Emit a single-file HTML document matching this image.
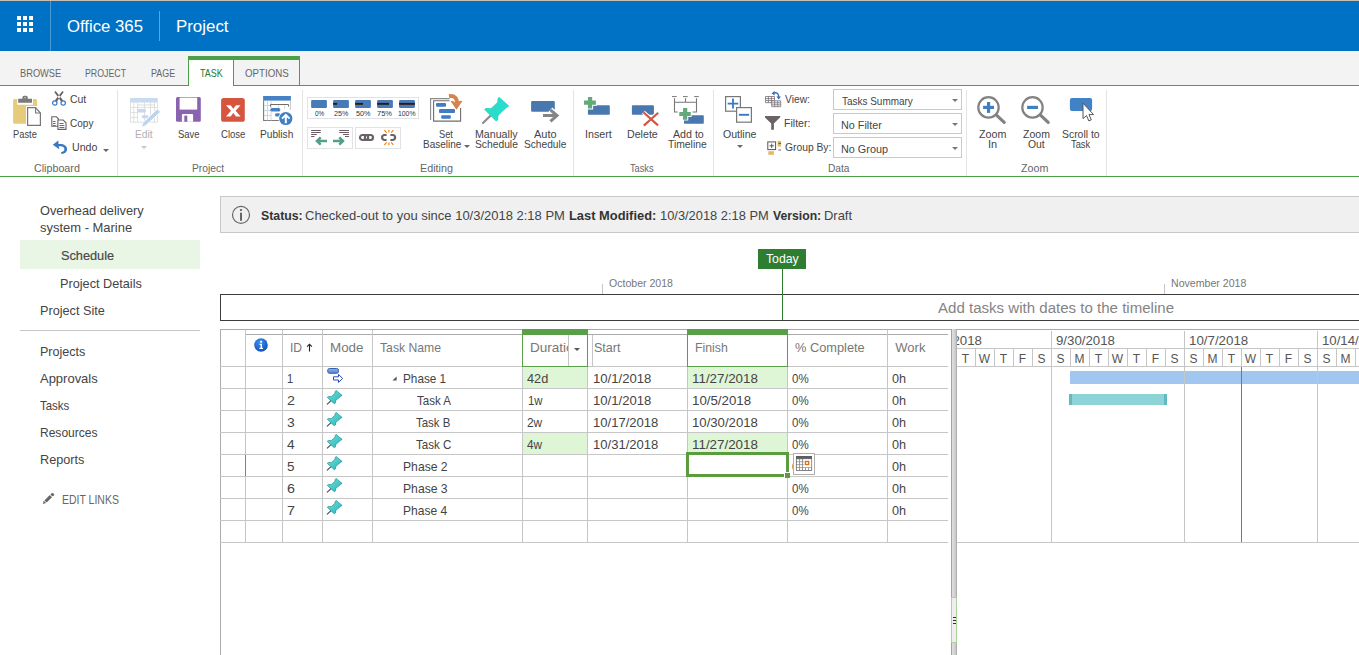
<!DOCTYPE html><html lang="en"><head><meta charset="utf-8"><title>Project - Schedule</title><style>
html,body{margin:0;padding:0;background:#fff}
body{width:1359px;height:655px;overflow:hidden;font-family:"Liberation Sans",sans-serif}
#page{position:relative;width:1359px;height:655px;overflow:hidden;background:#fff}
#page div,#page span,#page svg{position:absolute}
.sec{left:0;top:0;width:0;height:0}
.t{white-space:nowrap;line-height:1;transform-origin:0 0}
.ln{background:#c6c6c6}
.gs{background:#e3e3e3;width:1px;top:90px;height:86px}
.sel{left:833px;width:127px;height:19px;border:1px solid #c9c9c9;background:#fff}
.arr{width:0;height:0;border-left:3px solid transparent;border-right:3px solid transparent;border-top:3px solid #666}
.hl{background:#def6d6}
.dl{font-size:12px;color:#555;width:19px;text-align:center;line-height:1;top:353px}
</style></head><body><div id="page">
<div class="sec" id="suite">
<div style="left:0;top:0;width:1359px;height:1px;background:#cbbdb1"></div>
<div style="left:0;top:1px;width:1359px;height:50px;background:#0072c6"></div>
<div style="left:50px;top:1px;width:1px;height:50px;background:#4a9ad6"></div>
<div style="left:159px;top:11px;width:1px;height:30px;background:#5aa5dc"></div>
<svg style="left:17px;top:16px" width="16" height="16" viewBox="0 0 16 16" ><rect x="0" y="0" width="4" height="4" fill="#fff"/><rect x="0" y="6" width="4" height="4" fill="#fff"/><rect x="0" y="12" width="4" height="4" fill="#fff"/><rect x="6" y="0" width="4" height="4" fill="#fff"/><rect x="6" y="6" width="4" height="4" fill="#fff"/><rect x="6" y="12" width="4" height="4" fill="#fff"/><rect x="12" y="0" width="4" height="4" fill="#fff"/><rect x="12" y="6" width="4" height="4" fill="#fff"/><rect x="12" y="12" width="4" height="4" fill="#fff"/></svg>
<span class="t" style="left:67.19px;top:18.0px;font-size:17px;color:#fff;transform:scaleX(0.9843);">Office 365</span>
<span class="t" style="left:176.21px;top:18.0px;font-size:17px;color:#fff;transform:scaleX(0.9923);">Project</span>
</div>
<div class="sec" id="tabs">
<div style="left:0;top:51px;width:1359px;height:34px;background:#f3f3f3"></div>
<div style="left:0;top:85px;width:1359px;height:1px;background:#4aa04a"></div>
<div style="left:188px;top:56px;width:112px;height:4px;background:#4aa04a"></div>
<div style="left:188px;top:60px;width:1px;height:26px;background:#4aa04a"></div>
<div style="left:189px;top:60px;width:44px;height:26px;background:#fff"></div>
<div style="left:233px;top:60px;width:1px;height:26px;background:#4aa04a"></div>
<div style="left:299px;top:60px;width:1px;height:26px;background:#4aa04a"></div>
<span class="t" style="left:19.86px;top:68.0px;font-size:11px;color:#666;transform:scaleX(0.8438);">BROWSE</span>
<span class="t" style="left:85.18px;top:68.0px;font-size:11px;color:#666;transform:scaleX(0.7989);">PROJECT</span>
<span class="t" style="left:150.63px;top:68.0px;font-size:11px;color:#666;transform:scaleX(0.8107);">PAGE</span>
<span class="t" style="left:199.90px;top:68.0px;font-size:11px;color:#267a36;transform:scaleX(0.8143);">TASK</span>
<span class="t" style="left:245.18px;top:68.0px;font-size:11px;color:#666;transform:scaleX(0.8853);">OPTIONS</span>
</div>
<div class="sec" id="ribbon">
<div style="left:0;top:86px;width:1359px;height:90px;background:#fff"></div>
<div style="left:0;top:176px;width:1359px;height:1px;background:#4aa04a"></div>
<div class="gs" style="left:117px"></div>
<div class="gs" style="left:302px"></div>
<div class="gs" style="left:573px"></div>
<div class="gs" style="left:713px"></div>
<div class="gs" style="left:966px"></div>
<div class="gs" style="left:1106px"></div>
<div class="arr" style="left:103px;top:149px"></div>
<div class="arr" style="left:141px;top:146px;border-top-color:#c8c8c8"></div>
<div class="arr" style="left:464px;top:145px"></div>
<div class="arr" style="left:737px;top:145px"></div>
<div class="sel" style="top:89px"></div>
<div class="arr" style="left:952px;top:99px;border-top-color:#777"></div>
<div class="sel" style="top:113px"></div>
<div class="arr" style="left:952px;top:123px;border-top-color:#777"></div>
<div class="sel" style="top:137px"></div>
<div class="arr" style="left:952px;top:147px;border-top-color:#777"></div>
<svg style="left:13px;top:95px" width="29" height="32" viewBox="0 0 29 32" ><rect x=".1" y="4" width="24" height="24.8" rx="1.6" fill="#e7cb7d"/><path d="M4.2 8.8V2.8h4.4V.9a2 2 0 0 1 2-1.9h3a2 2 0 0 1 2 1.9v1.9h4.4v6z" fill="#fff" transform="translate(0,1)"/><path d="M5.2 7.8V3.8h4.2V2.4a1.7 1.7 0 0 1 1.7-1.7h2a1.7 1.7 0 0 1 1.7 1.7v1.4H19v4z" fill="#7a7a7a"/><rect x="11.3" y="2" width="1.6" height="1.3" rx=".5" fill="#cfcfcf"/><rect x="13" y="11" width="16" height="21" fill="#fff"/><path d="M14.6 12.6h8l4.8 5.4v12.4H14.6z" fill="#fff" stroke="#777" stroke-width="1.2"/><path d="M22.6 12.6v5.4h4.8" fill="none" stroke="#777" stroke-width="1.1"/></svg>
<svg style="left:51px;top:90px" width="16" height="17" viewBox="0 0 16 17" ><path d="M3.3 1.9l1.3-.8 7.5 9.1-1.9 1.5zM12.7 1.9l-1.3-.8-7.5 9.1 1.9 1.5z" fill="#6a6267"/><circle cx="3.8" cy="13" r="2.2" fill="none" stroke="#3b78c3" stroke-width="1.2"/><circle cx="12.2" cy="13" r="2.2" fill="none" stroke="#3b78c3" stroke-width="1.2"/></svg>
<svg style="left:51px;top:116px" width="17" height="15" viewBox="0 0 17 15" ><path d="M.8.8h4.6l2 2v7.4H.8z" fill="#fff" stroke="#6a6267" stroke-width="1.1"/><path d="M2 5.5h2.6M2 7.5h2.6M2 9.5h2.6" stroke="#3b78c3" stroke-width="1"/><path d="M6.9 4h5.3l2.8 2.8v6.6H6.9z" fill="#fff" stroke="#6a6267" stroke-width="1.1"/><path d="M8.4 7.5h4.2M8.4 9.5h5M8.4 11.5h5" stroke="#3b78c3" stroke-width="1"/></svg>
<svg style="left:52px;top:140px" width="16" height="15" viewBox="0 0 16 15" ><path d="M6.3.5L.8 4.7l6.4 4.5-.5-2.9c3.6-.5 5.8.7 5.7 2.9-.1 1.7-1.4 2.6-3.5 3l.7 1.9c3.5-.5 5.5-2.1 5.5-5 0-3.5-3.6-5.6-8.6-5.1z" fill="#3b78c3"/></svg>
<svg style="left:130px;top:97px" width="31" height="31" viewBox="0 0 31 31" ><rect x="0" y="1" width="27.8" height="4.6" fill="#c8dbef"/><path d="M.5 5.6v19.6h27V5.6M0 10.5h28M0 15.5h7.5M0 20.5h7.5M3.8 5.6v19.6M7.5 5.6v19.6M14.5 5.6v19.6M20.5 5.6v19.6M24.5 5.6v19.6" fill="none" stroke="#e0e0e0" stroke-width="1"/><path d="M7.5 10.4v-2.4h17v3" fill="none" stroke="#dadada"/><rect x="7.2" y="12" width="8.7" height="3.5" rx="1" fill="#c5d8ee"/><rect x="11.9" y="18.2" width="6.6" height="3" rx="1" fill="#c5d8ee"/><path d="M27.4 11.8l3.2 3.2-15.1 13.8-4.1 1.6 1.2-4.5z" fill="#bfd4ec" stroke="#fff" stroke-width="1"/></svg>
<svg style="left:176px;top:97px" width="26" height="26" viewBox="0 0 26 26" ><rect x="0" y="0" width="24.8" height="24.8" rx="1.6" fill="#8a63b0"/><rect x="3.6" y=".6" width="17.6" height="12" fill="#fff"/><path d="M5.9 24.8v-6.9a1 1 0 0 1 1-1h9.2a1 1 0 0 1 1 1v6.9z" fill="#fff"/><rect x="8.3" y="18.6" width="3" height="6.2" fill="#8a63b0"/></svg>
<svg style="left:221px;top:97px" width="25" height="26" viewBox="0 0 25 26" ><rect x=".1" y="1" width="23.7" height="23.8" rx="2.6" fill="#d6553e"/><path d="M5 8.2h4.6l2.7 3.5 2.7-3.5h4.6l-5 5.6 5 5.7h-4.6l-2.7-3.6-2.7 3.6H5l5-5.7z" fill="#fff"/></svg>
<svg style="left:263px;top:96px" width="32" height="31" viewBox="0 0 32 31" ><rect x=".1" y="0" width="27.8" height="4.6" fill="#4682c3"/><path d="M.6 4.6V24.5H16" fill="none" stroke="#7a7a7a" stroke-width="1.1"/><path d="M27.4 4.6V14" fill="none" stroke="#c4c4c4"/><path d="M1 9.5h7M1 14.5h7M1 19.5h7M4.5 5v19.5M8 5v19.5" fill="none" stroke="#c9d6e6"/><path d="M15.5 9v6M21.5 9v4" stroke="#dcdcdc"/><path d="M7.5 10.6V8.5h18v2.1" fill="none" stroke="#6e6e6e" stroke-width="1"/><rect x="7.4" y="11.9" width="9.9" height="3.7" rx="1.7" fill="#4682c3"/><rect x="12" y="17.2" width="5.3" height="3.3" rx="1.5" fill="#4682c3"/><circle cx="22.8" cy="22.5" r="7.4" fill="#fff"/><circle cx="22.8" cy="22.5" r="6.6" fill="#3f7fc4"/><path d="M22.8 27.2V19.2M19 22.6l3.8-3.8 3.8 3.8" fill="none" stroke="#fff" stroke-width="2"/></svg>
<svg style="left:307px;top:97px" width="112" height="22" viewBox="0 0 112 22" ><rect x=".5" y=".5" width="111" height="21" fill="#fff" stroke="#dfe2e6"/><rect x="4.1" y="3" width="15.8" height="7.9" rx="1" fill="#487ab8"/><rect x="26.1" y="3" width="15.8" height="7.9" rx="1" fill="#487ab8"/><rect x="26.1" y="5.9" width="4.0" height="1.9" fill="#32190c"/><rect x="48.1" y="3" width="15.8" height="7.9" rx="1" fill="#487ab8"/><rect x="48.1" y="5.9" width="7.9" height="1.9" fill="#32190c"/><rect x="70.1" y="3" width="15.8" height="7.9" rx="1" fill="#487ab8"/><rect x="70.1" y="5.9" width="11.9" height="1.9" fill="#32190c"/><rect x="92.1" y="3" width="15.8" height="7.9" rx="1" fill="#487ab8"/><rect x="92.1" y="5.9" width="15.8" height="1.9" fill="#32190c"/></svg>
<svg style="left:307px;top:127px" width="46" height="22" viewBox="0 0 46 22" ><rect x=".5" y=".5" width="45" height="21" fill="#fff" stroke="#dfe2e6"/><path d="M4.1 3.5h9.7M4.1 5.5h9.7M4.1 7.5h5.7M4.1 9.5h3.4" stroke="#6a5a66" stroke-width="1"/><path d="M32.3 3.5H42M32.3 5.5H42M36 7.5h6M38 9.5h4" stroke="#6a5a66" stroke-width="1"/><path d="M20 14H10.6M13.7 10.4L10 14l3.7 3.6" fill="none" stroke="#52a08a" stroke-width="2.5"/><path d="M26 14h9.4M32.3 10.4L36 14l-3.7 3.6" fill="none" stroke="#52a08a" stroke-width="2.5"/></svg>
<svg style="left:355px;top:127px" width="46" height="22" viewBox="0 0 46 22" ><rect x=".5" y=".5" width="45" height="21" fill="#fff" stroke="#dfe2e6"/><rect x="5" y="8" width="8.2" height="5" rx="2.5" fill="none" stroke="#6a6068" stroke-width="2.2"/><rect x="9.8" y="8" width="8.2" height="5" rx="2.5" fill="none" stroke="#6a6068" stroke-width="2.2"/><path d="M31.6 8h-2a2.5 2.5 0 0 0 0 5h2M35.4 8h2.2a2.5 2.5 0 0 1 0 5h-2.2" fill="none" stroke="#6a6068" stroke-width="2.2"/><path d="M33.9 3v2.6M29.4 3.2l2.2 2.4M38.4 3.2l-2.2 2.4M33.9 18v-2.6M29.4 17.8l2.200-2.4M38.4 17.8l-2.200-2.4" stroke="#f07800" stroke-width="1.1"/></svg>
<svg style="left:430px;top:93px" width="33" height="30" viewBox="0 0 33 30" ><path d="M.6 27V5.6h19" fill="none" stroke="#8a8a8a" stroke-width="1.1"/><path d="M19.5 7.8H3.6v20.3h27V15" fill="none" stroke="#6e6e6e" stroke-width="1.1"/><rect x="6" y="10.1" width="10" height="3.7" rx="1" fill="#3f7cc4"/><rect x="9" y="16.1" width="16" height="3.8" rx="1" fill="#3f7cc4"/><rect x="11.2" y="22.2" width="9.6" height="3.6" rx="1" fill="#3f7cc4"/><path d="M19 3.2c5.4-1 8.6 2 7.8 7.6" fill="none" stroke="#d5834b" stroke-width="3.8"/><path d="M20.6 8l2.2-.2 3.4 2.6 3.6-2.6 2.6.2-5.9 8.8z" fill="#d5834b"/></svg>
<svg style="left:482px;top:96px" width="28" height="28" viewBox="0 0 28 28" ><path d="M1 27l8.6-8.4" stroke="#8f8f8f" stroke-width="2.2" stroke-linecap="round"/><path d="M17 .7L27.3 10l-2.9 2-4.7 4.2-3.3 3.6-.3 4.1-2 1.5L2.2 13.6l1.6-1.6 5.1.3 6.2-5.9.5-3.6z" fill="#2adccb"/></svg>
<svg style="left:530px;top:101px" width="30" height="22" viewBox="0 0 30 22" ><rect x="1.1" y=".1" width="23.7" height="10.7" rx="1" fill="#4878ae"/><path d="M13 14.5h13.5M20.4 8.6l6.6 5.9-6.6 6" fill="none" stroke="#fff" stroke-width="5.6"/><path d="M13 14.5h14M20.4 8.8l6.6 5.7-6.6 5.9" fill="none" stroke="#858585" stroke-width="3"/></svg>
<svg style="left:583px;top:97px" width="28" height="19" viewBox="0 0 28 19" ><rect x="4.9" y="8.2" width="21.9" height="9.6" rx=".8" fill="#4878ae"/><path d="M7.05 0v12.5M0 5.7h13.9" stroke="#fff" stroke-width="6.2"/><path d="M7.05 0v11.5M1 5.7h11.9" stroke="#62a97b" stroke-width="4.2"/></svg>
<svg style="left:631px;top:104px" width="29" height="23" viewBox="0 0 29 23" ><rect x=".9" y="1.2" width="22" height="9.6" rx=".8" fill="#4878ae"/><path d="M12.4 8.2L27 21.4M27.2 8.8L12.8 21.6" stroke="#fff" stroke-width="4.2"/><path d="M12.4 8.2L27 21.4M27.2 8.8L12.8 21.6" stroke="#d4553f" stroke-width="2.1"/></svg>
<svg style="left:672px;top:96px" width="33" height="29" viewBox="0 0 33 29" ><path d="M0 .6h4.7M11 .6h4.7M22.2 .6h4.6" stroke="#777" stroke-width="1"/><path d="M2.5 2.2v13.8h3.2M24.5 2.2v13.8h-4M13.5 2.2v4M2.5 6.3h22" fill="none" stroke="#777" stroke-width="1.1"/><rect x="12" y="19.2" width="19.8" height="8.6" rx=".8" fill="#4878ae"/><path d="M13.15 11.4v13M6.6 18h13" stroke="#fff" stroke-width="6.2"/><path d="M13.15 12.1v11.7M7.3 18h11.5" stroke="#62a97b" stroke-width="4.2"/></svg>
<svg style="left:725px;top:96px" width="28" height="28" viewBox="0 0 28 28" ><rect x=".6" y=".6" width="14.8" height="14.6" fill="#fff" stroke="#777" stroke-width="1.2"/><path d="M8 2.6v9.9M2.7 7.55h10.6" stroke="#3b78c3" stroke-width="1.8"/><rect x="11.6" y="11.6" width="14.8" height="14.6" fill="#fff" stroke="#777" stroke-width="1.2"/><path d="M13.9 18.8h10.2" stroke="#3b78c3" stroke-width="1.9"/></svg>
<svg style="left:765px;top:90px" width="17" height="18" viewBox="0 0 17 18" ><path d="M.5 6.5h9v6.2h-9zM.5 8.6h9M.5 10.6h9M3.4 6.5v6.2M6.4 6.5v6.2" fill="#fff" stroke="#756e74" stroke-width=".8"/><path d="M6.7 10.8h9v5.9h-9zM6.7 12.8h9M6.7 14.8h9M9.7 10.8v5.9M12.7 10.8v5.9" fill="#fff" stroke="#756e74" stroke-width=".8"/><path d="M8.6 3.2c3-1.4 5.2.4 5 4" fill="none" stroke="#3b6fb5" stroke-width="1.4"/><path d="M6.6 3.4l3-2.6v4.6zM11.4 6.6h4.6l-2.3 3z" fill="#3b6fb5"/></svg>
<svg style="left:765px;top:116px" width="16" height="15" viewBox="0 0 16 15" ><path d="M-.2 0h15.4v1.2L8.9 7.6v6.1H6.2V7.6L-.2 1.2z" fill="#6a6468"/></svg>
<svg style="left:767px;top:140px" width="16" height="16" viewBox="0 0 16 16" ><rect x=".8" y="1.9" width="7.8" height="7.7" fill="#fff" stroke="#555" stroke-width="1"/><path d="M4.7 3.6v4.4M2.5 5.8h4.4" stroke="#555"/><rect x="10.6" y=".9" width="3.4" height="5.6" fill="#e6b866"/><rect x="11.4" y="2.9" width="2.6" height="1" fill="#555"/><rect x="11.4" y="9.6" width="2.6" height=".9" fill="#555"/><rect x="1.3" y="11.2" width="5.6" height="3.6" fill="#e6b866"/></svg>
<svg style="left:977px;top:96px" width="30" height="29" viewBox="0 0 30 29" ><path d="M19.2 18.8l8 7.6" stroke="#828282" stroke-width="3.2" stroke-linecap="round"/><circle cx="11.5" cy="11.4" r="10.2" fill="#fff" stroke="#828282" stroke-width="2.2"/><path d="M6.1 11.4h10.9" stroke="#3f7fc4" stroke-width="3.2"/><path d="M11.55 6v10.9" stroke="#3f7fc4" stroke-width="3.2"/></svg>
<svg style="left:1021px;top:96px" width="30" height="29" viewBox="0 0 30 29" ><path d="M19.2 18.8l8 7.6" stroke="#828282" stroke-width="3.2" stroke-linecap="round"/><circle cx="11.5" cy="11.4" r="10.2" fill="#fff" stroke="#828282" stroke-width="2.2"/><path d="M6.1 11.4h10.9" stroke="#3f7fc4" stroke-width="3.2"/></svg>
<svg style="left:1069px;top:98px" width="26" height="25" viewBox="0 0 26 25" ><rect x=".9" y="0" width="22.2" height="13.1" rx="2" fill="#4181c6"/><path d="M14 5.2v15.4l3.5-3 2.3 5.3 2.5-1.1-2.3-5.2h4.6z" fill="#fff" stroke="#555" stroke-width="1"/></svg>
<span class="t" style="left:13.30px;top:128.6px;font-size:11px;color:#444;transform:scaleX(0.8465);">Paste</span>
<span class="t" style="left:70.30px;top:93.7px;font-size:11px;color:#444;transform:scaleX(0.9471);">Cut</span>
<span class="t" style="left:70.30px;top:118.0px;font-size:11px;color:#444;transform:scaleX(0.9115);">Copy</span>
<span class="t" style="left:71.59px;top:141.7px;font-size:11px;color:#444;transform:scaleX(0.9652);">Undo</span>
<span class="t" style="left:177.57px;top:128.6px;font-size:11px;color:#444;transform:scaleX(0.8628);">Save</span>
<span class="t" style="left:220.80px;top:128.6px;font-size:11px;color:#444;transform:scaleX(0.8691);">Close</span>
<span class="t" style="left:260.08px;top:128.6px;font-size:11px;color:#444;transform:scaleX(0.9229);">Publish</span>
<span class="t" style="left:439.16px;top:128.6px;font-size:11px;color:#444;transform:scaleX(0.8446);">Set</span>
<span class="t" style="left:422.58px;top:138.7px;font-size:11px;color:#444;transform:scaleX(0.9085);">Baseline</span>
<span class="t" style="left:474.77px;top:128.6px;font-size:11px;color:#444;transform:scaleX(0.9672);">Manually</span>
<span class="t" style="left:475.30px;top:138.7px;font-size:11px;color:#444;transform:scaleX(0.9341);">Schedule</span>
<span class="t" style="left:534.49px;top:128.6px;font-size:11px;color:#444;transform:scaleX(0.9958);">Auto</span>
<span class="t" style="left:523.70px;top:138.7px;font-size:11px;color:#444;transform:scaleX(0.9235);">Schedule</span>
<span class="t" style="left:584.83px;top:128.6px;font-size:11px;color:#444;transform:scaleX(0.9704);">Insert</span>
<span class="t" style="left:627.03px;top:128.6px;font-size:11px;color:#444;transform:scaleX(0.9677);">Delete</span>
<span class="t" style="left:672.85px;top:128.6px;font-size:11px;color:#444;transform:scaleX(0.9673);">Add to</span>
<span class="t" style="left:668.10px;top:138.7px;font-size:11px;color:#444;transform:scaleX(0.9413);">Timeline</span>
<span class="t" style="left:722.70px;top:128.6px;font-size:11px;color:#444;transform:scaleX(0.9600);">Outline</span>
<span class="t" style="left:785.03px;top:93.7px;font-size:11px;color:#444;transform:scaleX(0.9319);">View:</span>
<span class="t" style="left:784.04px;top:118.0px;font-size:11px;color:#444;transform:scaleX(0.9615);">Filter:</span>
<span class="t" style="left:784.60px;top:141.7px;font-size:11px;color:#444;transform:scaleX(0.9367);">Group By:</span>
<span class="t" style="left:841.50px;top:95.8px;font-size:11px;color:#444;transform:scaleX(0.9050);">Tasks Summary</span>
<span class="t" style="left:840.51px;top:119.6px;font-size:11px;color:#444;transform:scaleX(0.9814);">No Filter</span>
<span class="t" style="left:841.29px;top:143.6px;font-size:11px;color:#444;transform:scaleX(0.9854);">No Group</span>
<span class="t" style="left:979.00px;top:128.6px;font-size:11px;color:#444;transform:scaleX(0.9750);">Zoom</span>
<span class="t" style="left:987.68px;top:138.7px;font-size:11px;color:#444;transform:scaleX(0.9962);">In</span>
<span class="t" style="left:1023.20px;top:128.6px;font-size:11px;color:#444;transform:scaleX(0.9571);">Zoom</span>
<span class="t" style="left:1028.00px;top:138.7px;font-size:11px;color:#444;transform:scaleX(0.9444);">Out</span>
<span class="t" style="left:1061.81px;top:128.6px;font-size:11px;color:#444;transform:scaleX(0.9464);">Scroll to</span>
<span class="t" style="left:1070.98px;top:138.7px;font-size:11px;color:#444;transform:scaleX(0.8457);">Task</span>
<span class="t" style="left:134.95px;top:129.0px;font-size:11px;color:#b1b1b1;transform:scaleX(0.9353);">Edit</span>
<span class="t" style="left:34.35px;top:162.5px;font-size:11px;color:#666;transform:scaleX(0.9734);">Clipboard</span>
<span class="t" style="left:191.80px;top:162.5px;font-size:11px;color:#666;transform:scaleX(0.9346);">Project</span>
<span class="t" style="left:419.77px;top:162.5px;font-size:11px;color:#666;transform:scaleX(0.9794);">Editing</span>
<span class="t" style="left:630.40px;top:162.5px;font-size:11px;color:#666;transform:scaleX(0.8393);">Tasks</span>
<span class="t" style="left:827.80px;top:162.5px;font-size:11px;color:#666;transform:scaleX(0.9196);">Data</span>
<span class="t" style="left:1021.10px;top:162.5px;font-size:11px;color:#666;transform:scaleX(0.9740);">Zoom</span>
<span class="t" style="left:314.80px;top:109.8px;font-size:7.5px;color:#2c3838;transform:scaleX(0.8545);">0%</span>
<span class="t" style="left:333.70px;top:109.8px;font-size:7.5px;color:#2c3838;transform:scaleX(0.9533);">25%</span>
<span class="t" style="left:355.80px;top:109.8px;font-size:7.5px;color:#2c3838;transform:scaleX(0.9667);">50%</span>
<span class="t" style="left:377.21px;top:109.8px;font-size:7.5px;color:#2c3838;transform:scaleX(0.9929);">75%</span>
<span class="t" style="left:397.89px;top:109.8px;font-size:7.5px;color:#2c3838;transform:scaleX(0.9111);">100%</span>
</div>
<div class="sec" id="nav">
<div style="left:20px;top:240px;width:180px;height:29px;background:#e9f6e6"></div>
<div class="ln" style="left:20px;top:330px;width:180px;height:1px"></div>
<svg style="left:42px;top:492px" width="13" height="13" viewBox="0 0 13 13" ><path d="M3.5 9.5l5.400-5.4" stroke="#666" stroke-width="3.1"/><path d="M.9 11.9l.8-3.1 2.3 2.3z" fill="#666"/><circle cx="10.4" cy="2.6" r="1.7" fill="#666"/><path d="M8.4 2.6l2 2" stroke="#fff" stroke-width=".5"/></svg>
<span class="t" style="left:40.41px;top:203.8px;font-size:13px;color:#444;transform:scaleX(0.9832);">Overhead delivery</span>
<span class="t" style="left:40.30px;top:221.0px;font-size:13px;color:#444;transform:scaleX(0.9967);">system - Marine</span>
<span class="t" style="left:59.50px;top:276.6px;font-size:13px;color:#444;transform:scaleX(0.9765);">Project Details</span>
<span class="t" style="left:39.53px;top:303.5px;font-size:13px;color:#444;transform:scaleX(0.9744);">Project Site</span>
<span class="t" style="left:39.75px;top:344.5px;font-size:13px;color:#444;transform:scaleX(0.9654);">Projects</span>
<span class="t" style="left:40.30px;top:371.8px;font-size:13px;color:#444;transform:scaleX(0.9982);">Approvals</span>
<span class="t" style="left:40.30px;top:398.5px;font-size:13px;color:#444;transform:scaleX(0.8818);">Tasks</span>
<span class="t" style="left:39.87px;top:425.5px;font-size:13px;color:#444;transform:scaleX(0.9250);">Resources</span>
<span class="t" style="left:39.82px;top:452.5px;font-size:13px;color:#444;transform:scaleX(0.9749);">Reports</span>
<span class="t" style="left:61.05px;top:248.5px;font-size:13px;color:#4a4a4a;transform:scaleX(0.9781);-webkit-text-stroke:.2px #4a4a4a;">Schedule</span>
<span class="t" style="left:61.98px;top:494.0px;font-size:12px;color:#666;transform:scaleX(0.8731);">EDIT LINKS</span>
</div>
<div class="sec" id="status">
<div style="left:220px;top:196px;width:1160px;height:35px;background:#f0f0f0;border:1px solid #c8c8c8"></div>
<svg style="left:231px;top:205px" width="20" height="20" viewBox="0 0 20 20" ><circle cx="10" cy="9.9" r="8.5" fill="none" stroke="#666" stroke-width="1.2"/><rect x="9" y="7.7" width="2" height="8.1" fill="#666"/><rect x="8.9" y="3.9" width="2.2" height="2.1" rx=".8" fill="#666"/></svg>
<span class="t" style="left:260.75px;top:209.0px;font-size:13px;color:#333;transform:scaleX(0.9470);font-weight:700;">Status:</span>
<span class="t" style="left:305.08px;top:209.0px;font-size:13px;color:#444;transform:scaleX(0.9990);">Checked-out to you since 10/3/2018 2:18 PM</span>
<span class="t" style="left:569.03px;top:209.0px;font-size:13px;color:#333;transform:scaleX(0.9908);font-weight:700;">Last Modified:</span>
<span class="t" style="left:660.04px;top:209.0px;font-size:13px;color:#444;transform:scaleX(0.9892);">10/3/2018 2:18 PM</span>
<span class="t" style="left:773.13px;top:209.0px;font-size:13px;color:#333;transform:scaleX(0.9395);font-weight:700;">Version:</span>
<span class="t" style="left:824.25px;top:209.0px;font-size:13px;color:#444;transform:scaleX(0.9946);">Draft</span>
</div>
<div class="sec" id="timeline">
<div class="ln" style="left:602px;top:284px;width:1px;height:10px"></div>
<div class="ln" style="left:1164px;top:284px;width:1px;height:10px"></div>
<div style="left:220px;top:294px;width:1160px;height:25px;border:1px solid #3c3c3c;background:#fff"></div>
<div style="left:758px;top:249px;width:48px;height:20px;background:#2f7d31"></div>
<div style="left:782px;top:269px;width:1px;height:51px;background:#2f7d31"></div>
<span class="t" style="left:765.50px;top:251.5px;font-size:13px;color:#fff;transform:scaleX(0.9406);">Today</span>
<span class="t" style="left:609.45px;top:277.8px;font-size:11px;color:#777;transform:scaleX(0.9589);">October 2018</span>
<span class="t" style="left:1171.15px;top:278.0px;font-size:11px;color:#777;transform:scaleX(0.9631);">November 2018</span>
<span class="t" style="left:938.49px;top:300.0px;font-size:15.5px;color:#848484;transform:scaleX(0.9715);">Add tasks with dates to the timeline</span>
</div>
<div class="sec" id="grid">
<div class="hl" style="left:523px;top:367px;width:64px;height:21px"></div>
<div class="hl" style="left:523px;top:433px;width:64px;height:21px"></div>
<div class="hl" style="left:688px;top:367px;width:99px;height:21px"></div>
<div class="hl" style="left:688px;top:433px;width:99px;height:21px"></div>
<div class="ln" style="left:220px;top:329px;width:1px;height:326px;background:#ababab"></div>
<div class="ln" style="left:220px;top:329px;width:1139px;height:1px;background:#ababab"></div>
<div class="ln" style="left:245px;top:334px;width:703px;height:1px;background:#ababab"></div>
<div class="ln" style="left:220px;top:366px;width:728px;height:1px"></div>
<div class="ln" style="left:220px;top:388px;width:728px;height:1px"></div>
<div class="ln" style="left:220px;top:410px;width:728px;height:1px"></div>
<div class="ln" style="left:220px;top:432px;width:728px;height:1px"></div>
<div class="ln" style="left:220px;top:454px;width:728px;height:1px"></div>
<div class="ln" style="left:220px;top:476px;width:728px;height:1px"></div>
<div class="ln" style="left:220px;top:498px;width:728px;height:1px"></div>
<div class="ln" style="left:220px;top:520px;width:728px;height:1px"></div>
<div class="ln" style="left:220px;top:542px;width:728px;height:1px"></div>
<div class="ln" style="left:245px;top:330px;height:212px;width:1px"></div>
<div class="ln" style="left:282px;top:330px;height:212px;width:1px"></div>
<div class="ln" style="left:322px;top:330px;height:212px;width:1px"></div>
<div class="ln" style="left:372px;top:330px;height:212px;width:1px"></div>
<div class="ln" style="left:522px;top:330px;height:212px;width:1px"></div>
<div class="ln" style="left:587px;top:330px;height:212px;width:1px"></div>
<div class="ln" style="left:687px;top:330px;height:212px;width:1px"></div>
<div class="ln" style="left:787px;top:330px;height:212px;width:1px"></div>
<div class="ln" style="left:887px;top:330px;height:212px;width:1px"></div>
<div class="ln" style="left:592px;top:335px;width:1px;height:31px"></div>
<div class="ln" style="left:568px;top:335px;width:1px;height:31px"></div>
<div style="left:522px;top:329px;width:66px;height:6px;background:#5a9e47"></div>
<div style="left:522px;top:335px;width:64px;height:31px;border:1px solid #5a9e47;border-top:0"></div>
<div style="left:687px;top:329px;width:101px;height:6px;background:#5a9e47"></div>
<div style="left:687px;top:335px;width:99px;height:31px;border:1px solid #5a9e47;border-top:0"></div>
<div class="arr" style="left:574px;top:348px;border-left-width:3.5px;border-right-width:3.5px;border-top-color:#555"></div>
<div style="left:245px;top:455px;width:1px;height:21px;background:#5a9e47"></div>
<div style="left:686px;top:452px;width:97px;height:19px;border:3px solid #5a9c3e;background:#fff"></div>
<div style="left:784px;top:472px;width:6px;height:6px;background:#fff"></div>
<div class="ln" style="left:787px;top:477px;width:1px;height:1px"></div>
<div style="left:785px;top:473px;width:5px;height:5px;background:#5a9c3e"></div>
<svg width="0" height="0" style="left:0;top:0"><defs><linearGradient id="pg" x1="0" y1="0" x2="1" y2="1"><stop offset="0" stop-color="#6fe3dd"/><stop offset="1" stop-color="#27b3b6"/></linearGradient></defs></svg>
<svg style="left:254px;top:338px" width="15" height="15" viewBox="0 0 15 15" ><defs><radialGradient id="ig" cx=".4" cy=".3" r=".8"><stop offset="0" stop-color="#3f8ff0"/><stop offset="1" stop-color="#0a49b8"/></radialGradient></defs><circle cx="7" cy="7" r="6.8" fill="url(#ig)"/><path d="M5.6 5.8h2.4v4h1v1.2H5.4V9.8h1.2V7H5.6z" fill="#fff"/><rect x="6.2" y="2.8" width="1.9" height="1.9" fill="#fff"/></svg>
<svg style="left:306px;top:342px" width="7" height="11" viewBox="0 0 7 11" ><path d="M3.5 9.4V2.4M1.1 4.7L3.5 2.2l2.4 2.5" fill="none" stroke="#222" stroke-width="1.1"/></svg>
<svg style="left:327px;top:368px" width="17" height="16" viewBox="0 0 17 16" ><defs><linearGradient id="am" x1="0" y1="0" x2="0" y2="1"><stop offset="0" stop-color="#8db4ea"/><stop offset="1" stop-color="#4f82d2"/></linearGradient></defs><rect x=".7" y=".5" width="10.8" height="4.8" rx="1.8" fill="url(#am)" stroke="#3a5fb0"/><path d="M6.5 8.8h5V6.4l4.1 4-4.1 4v-2.4h-5z" fill="#fff" stroke="#2b4fb8" stroke-width="1"/></svg>
<svg style="left:326px;top:390px" width="17" height="15" viewBox="0 0 17 15" ><path d="M1 14.4l4.6-4.2" stroke="#444" stroke-width="1.1"/><g transform="scale(.59,.54)"><path d="M17 .7L27.3 10l-2.9 2-4.7 4.2-3.3 3.6-.3 4.1-2 1.5L2.2 13.6l1.6-1.6 5.1.3 6.2-5.9.5-3.6z" fill="url(#pg)" stroke="#1f9399" stroke-width="1.3"/></g></svg>
<svg style="left:326px;top:412px" width="17" height="15" viewBox="0 0 17 15" ><path d="M1 14.4l4.6-4.2" stroke="#444" stroke-width="1.1"/><g transform="scale(.59,.54)"><path d="M17 .7L27.3 10l-2.9 2-4.7 4.2-3.3 3.6-.3 4.1-2 1.5L2.2 13.6l1.6-1.6 5.1.3 6.2-5.9.5-3.6z" fill="url(#pg)" stroke="#1f9399" stroke-width="1.3"/></g></svg>
<svg style="left:326px;top:434px" width="17" height="15" viewBox="0 0 17 15" ><path d="M1 14.4l4.6-4.2" stroke="#444" stroke-width="1.1"/><g transform="scale(.59,.54)"><path d="M17 .7L27.3 10l-2.9 2-4.7 4.2-3.3 3.6-.3 4.1-2 1.5L2.2 13.6l1.6-1.6 5.1.3 6.2-5.9.5-3.6z" fill="url(#pg)" stroke="#1f9399" stroke-width="1.3"/></g></svg>
<svg style="left:326px;top:456px" width="17" height="15" viewBox="0 0 17 15" ><path d="M1 14.4l4.6-4.2" stroke="#444" stroke-width="1.1"/><g transform="scale(.59,.54)"><path d="M17 .7L27.3 10l-2.9 2-4.7 4.2-3.3 3.6-.3 4.1-2 1.5L2.2 13.6l1.6-1.6 5.1.3 6.2-5.9.5-3.6z" fill="url(#pg)" stroke="#1f9399" stroke-width="1.3"/></g></svg>
<svg style="left:326px;top:478px" width="17" height="15" viewBox="0 0 17 15" ><path d="M1 14.4l4.6-4.2" stroke="#444" stroke-width="1.1"/><g transform="scale(.59,.54)"><path d="M17 .7L27.3 10l-2.9 2-4.7 4.2-3.3 3.6-.3 4.1-2 1.5L2.2 13.6l1.6-1.6 5.1.3 6.2-5.9.5-3.6z" fill="url(#pg)" stroke="#1f9399" stroke-width="1.3"/></g></svg>
<svg style="left:326px;top:500px" width="17" height="15" viewBox="0 0 17 15" ><path d="M1 14.4l4.6-4.2" stroke="#444" stroke-width="1.1"/><g transform="scale(.59,.54)"><path d="M17 .7L27.3 10l-2.9 2-4.7 4.2-3.3 3.6-.3 4.1-2 1.5L2.2 13.6l1.6-1.6 5.1.3 6.2-5.9.5-3.6z" fill="url(#pg)" stroke="#1f9399" stroke-width="1.3"/></g></svg>
<svg style="left:391px;top:375px" width="7" height="7" viewBox="0 0 7 7" ><path d="M5.6 1.4V5.6H1.4z" fill="#555"/></svg>
<div style="left:523px;top:335px;width:45px;height:31px;overflow:hidden"><div class="sec" style="left:-523px;top:-335px"><span class="t" style="left:529.94px;top:340.7px;font-size:13px;color:#777;transform:scaleX(1.0399);">Duration</span></div></div>
<span class="t" style="left:289.60px;top:340.7px;font-size:13px;color:#777;transform:scaleX(0.9326);">ID</span>
<span class="t" style="left:329.67px;top:340.7px;font-size:13px;color:#777;transform:scaleX(1.0306);">Mode</span>
<span class="t" style="left:380.00px;top:340.7px;font-size:13px;color:#777;transform:scaleX(0.9385);">Task Name</span>
<span class="t" style="left:594.40px;top:340.7px;font-size:13px;color:#777;transform:scaleX(0.9656);">Start</span>
<span class="t" style="left:694.58px;top:340.7px;font-size:13px;color:#777;transform:scaleX(0.9470);">Finish</span>
<span class="t" style="left:795.40px;top:340.7px;font-size:13px;color:#777;transform:scaleX(0.9843);">% Complete</span>
<span class="t" style="left:895.30px;top:340.7px;font-size:13px;color:#777;transform:scaleX(1.0000);">Work</span>
<span class="t" style="left:286.95px;top:372.0px;font-size:13px;color:#444;transform:scaleX(0.8500);">1</span>
<span class="t" style="left:402.57px;top:372.0px;font-size:13px;color:#444;transform:scaleX(0.9041);">Phase 1</span>
<span class="t" style="left:527.40px;top:372.0px;font-size:13px;color:#444;transform:scaleX(0.9810);">42d</span>
<span class="t" style="left:592.70px;top:372.0px;font-size:13px;color:#444;transform:scaleX(1.0089);">10/1/2018</span>
<span class="t" style="left:691.97px;top:372.0px;font-size:13px;color:#444;transform:scaleX(1.0286);">11/27/2018</span>
<span class="t" style="left:792.04px;top:372.0px;font-size:13px;color:#444;transform:scaleX(0.8862);">0%</span>
<span class="t" style="left:892.20px;top:372.0px;font-size:13px;color:#444;transform:scaleX(0.9714);">0h</span>
<span class="t" style="left:286.50px;top:394.0px;font-size:13px;color:#444;transform:scaleX(1.1000);">2</span>
<span class="t" style="left:417.18px;top:394.0px;font-size:13px;color:#444;transform:scaleX(0.8893);">Task A</span>
<span class="t" style="left:527.87px;top:394.0px;font-size:13px;color:#444;transform:scaleX(0.8740);">1w</span>
<span class="t" style="left:592.70px;top:394.0px;font-size:13px;color:#444;transform:scaleX(1.0089);">10/1/2018</span>
<span class="t" style="left:692.23px;top:394.0px;font-size:13px;color:#444;transform:scaleX(1.0208);">10/5/2018</span>
<span class="t" style="left:792.04px;top:394.0px;font-size:13px;color:#444;transform:scaleX(0.8862);">0%</span>
<span class="t" style="left:892.20px;top:394.0px;font-size:13px;color:#444;transform:scaleX(0.9714);">0h</span>
<span class="t" style="left:286.53px;top:416.0px;font-size:13px;color:#444;transform:scaleX(1.0667);">3</span>
<span class="t" style="left:416.45px;top:416.0px;font-size:13px;color:#444;transform:scaleX(0.8791);">Task B</span>
<span class="t" style="left:526.96px;top:416.0px;font-size:13px;color:#444;transform:scaleX(0.9132);">2w</span>
<span class="t" style="left:592.51px;top:416.0px;font-size:13px;color:#444;transform:scaleX(1.0037);">10/17/2018</span>
<span class="t" style="left:691.99px;top:416.0px;font-size:13px;color:#444;transform:scaleX(1.0125);">10/30/2018</span>
<span class="t" style="left:792.04px;top:416.0px;font-size:13px;color:#444;transform:scaleX(0.8862);">0%</span>
<span class="t" style="left:892.20px;top:416.0px;font-size:13px;color:#444;transform:scaleX(0.9714);">0h</span>
<span class="t" style="left:287.20px;top:438.0px;font-size:13px;color:#444;transform:scaleX(1.0571);">4</span>
<span class="t" style="left:416.25px;top:438.0px;font-size:13px;color:#444;transform:scaleX(0.8910);">Task C</span>
<span class="t" style="left:527.20px;top:438.0px;font-size:13px;color:#444;transform:scaleX(0.9059);">4w</span>
<span class="t" style="left:592.51px;top:438.0px;font-size:13px;color:#444;transform:scaleX(1.0037);">10/31/2018</span>
<span class="t" style="left:691.97px;top:438.0px;font-size:13px;color:#444;transform:scaleX(1.0286);">11/27/2018</span>
<span class="t" style="left:792.04px;top:438.0px;font-size:13px;color:#444;transform:scaleX(0.8862);">0%</span>
<span class="t" style="left:892.20px;top:438.0px;font-size:13px;color:#444;transform:scaleX(0.9714);">0h</span>
<span class="t" style="left:286.77px;top:460.0px;font-size:13px;color:#444;transform:scaleX(1.0333);">5</span>
<span class="t" style="left:402.77px;top:460.0px;font-size:13px;color:#444;transform:scaleX(0.9355);">Phase 2</span>
<span class="t" style="left:792.04px;top:460.0px;font-size:13px;color:#444;transform:scaleX(0.8862);">0%</span>
<span class="t" style="left:892.20px;top:460.0px;font-size:13px;color:#444;transform:scaleX(0.9714);">0h</span>
<span class="t" style="left:286.60px;top:482.0px;font-size:13px;color:#444;transform:scaleX(1.1000);">6</span>
<span class="t" style="left:402.77px;top:482.0px;font-size:13px;color:#444;transform:scaleX(0.9355);">Phase 3</span>
<span class="t" style="left:792.04px;top:482.0px;font-size:13px;color:#444;transform:scaleX(0.8862);">0%</span>
<span class="t" style="left:892.20px;top:482.0px;font-size:13px;color:#444;transform:scaleX(0.9714);">0h</span>
<span class="t" style="left:286.50px;top:504.0px;font-size:13px;color:#444;transform:scaleX(1.1000);">7</span>
<span class="t" style="left:402.79px;top:504.0px;font-size:13px;color:#444;transform:scaleX(0.9266);">Phase 4</span>
<span class="t" style="left:792.04px;top:504.0px;font-size:13px;color:#444;transform:scaleX(0.8862);">0%</span>
<span class="t" style="left:892.20px;top:504.0px;font-size:13px;color:#444;transform:scaleX(0.9714);">0h</span>
<svg style="left:793px;top:453px" width="22" height="22" viewBox="0 0 22 22" ><rect x=".5" y=".5" width="21" height="21" fill="#fff" stroke="#b0b0b0"/><rect x="3" y="3" width="16" height="14.8" fill="#8e8e8e"/><path d="M3.4 5.6v11.8h15.2V5.6" fill="none" stroke="#686868" stroke-width=".8"/><rect x="3" y="3" width="16" height="2.7" fill="#5e5e5e"/><rect x="3.80" y="6.30" width="2.2" height="2.1" fill="#fff"/><rect x="3.80" y="9.20" width="2.2" height="2.1" fill="#fff"/><rect x="3.80" y="12.10" width="2.2" height="2.1" fill="#fff"/><rect x="3.80" y="15.00" width="2.2" height="2.1" fill="#fff"/><rect x="6.85" y="6.30" width="2.2" height="2.1" fill="#fff"/><rect x="6.85" y="9.20" width="2.2" height="2.1" fill="#fff"/><rect x="6.85" y="12.10" width="2.2" height="2.1" fill="#fff"/><rect x="6.85" y="15.00" width="2.2" height="2.1" fill="#fff"/><rect x="9.90" y="6.30" width="2.2" height="2.1" fill="#fff"/><rect x="9.90" y="9.20" width="2.2" height="2.1" fill="#fff"/><rect x="9.90" y="12.10" width="2.2" height="2.1" fill="#fff"/><rect x="9.90" y="15.00" width="2.2" height="2.1" fill="#fff"/><rect x="12.95" y="6.30" width="2.2" height="2.1" fill="#fff"/><rect x="12.95" y="9.20" width="2.2" height="2.1" fill="#fff"/><rect x="12.95" y="12.10" width="2.2" height="2.1" fill="#fff"/><rect x="12.95" y="15.00" width="2.2" height="2.1" fill="#fff"/><rect x="16.00" y="6.30" width="2.2" height="2.1" fill="#fff"/><rect x="16.00" y="9.20" width="2.2" height="2.1" fill="#fff"/><rect x="16.00" y="12.10" width="2.2" height="2.1" fill="#fff"/><rect x="16.00" y="15.00" width="2.2" height="2.1" fill="#fff"/><rect x="10.8" y="6.3" width="7.4" height="7.9" fill="#fff"/><rect x="12.4" y="8.5" width="3.3" height="3" fill="#fff" stroke="#e36c0a" stroke-width="1.3"/></svg>
</div>
<div class="sec" id="gantt">
<div style="left:1070px;top:371px;width:289px;height:13px;background:#a1c6f0"></div>
<div style="left:1069px;top:394px;width:98px;height:11px;background:#8cd4d8"></div>
<div style="left:1069px;top:394px;width:3px;height:11px;background:#62bac0"></div>
<div style="left:1164px;top:394px;width:3px;height:11px;background:#62bac0"></div>
<div class="ln" style="left:957px;top:348px;width:402px;height:1px"></div>
<div class="ln" style="left:957px;top:366px;width:402px;height:1px"></div>
<div class="ln" style="left:957px;top:542px;width:402px;height:1px"></div>
<div class="ln" style="left:975px;top:349px;width:1px;height:17px"></div>
<div class="ln" style="left:994px;top:349px;width:1px;height:17px"></div>
<div class="ln" style="left:1013px;top:349px;width:1px;height:17px"></div>
<div class="ln" style="left:1032px;top:349px;width:1px;height:17px"></div>
<div class="ln" style="left:1051px;top:331px;width:1px;height:211px"></div>
<div class="ln" style="left:1070px;top:349px;width:1px;height:17px"></div>
<div class="ln" style="left:1089px;top:349px;width:1px;height:17px"></div>
<div class="ln" style="left:1108px;top:349px;width:1px;height:17px"></div>
<div class="ln" style="left:1127px;top:349px;width:1px;height:17px"></div>
<div class="ln" style="left:1146px;top:349px;width:1px;height:17px"></div>
<div class="ln" style="left:1165px;top:349px;width:1px;height:17px"></div>
<div class="ln" style="left:1184px;top:331px;width:1px;height:211px"></div>
<div class="ln" style="left:1203px;top:349px;width:1px;height:17px"></div>
<div class="ln" style="left:1222px;top:349px;width:1px;height:17px"></div>
<div class="ln" style="left:1241px;top:349px;width:1px;height:17px"></div>
<div class="ln" style="left:1260px;top:349px;width:1px;height:17px"></div>
<div class="ln" style="left:1279px;top:349px;width:1px;height:17px"></div>
<div class="ln" style="left:1298px;top:349px;width:1px;height:17px"></div>
<div class="ln" style="left:1317px;top:331px;width:1px;height:211px"></div>
<div class="ln" style="left:1336px;top:349px;width:1px;height:17px"></div>
<div class="ln" style="left:1355px;top:349px;width:1px;height:17px"></div>
<div style="left:1241px;top:367px;width:1px;height:175px;background:#4c9a3c"></div>
<span class="dl" style="left:956px">T</span>
<span class="dl" style="left:975px">W</span>
<span class="dl" style="left:994px">T</span>
<span class="dl" style="left:1013px">F</span>
<span class="dl" style="left:1032px">S</span>
<span class="dl" style="left:1051px">S</span>
<span class="dl" style="left:1070px">M</span>
<span class="dl" style="left:1089px">T</span>
<span class="dl" style="left:1108px">W</span>
<span class="dl" style="left:1127px">T</span>
<span class="dl" style="left:1146px">F</span>
<span class="dl" style="left:1165px">S</span>
<span class="dl" style="left:1184px">S</span>
<span class="dl" style="left:1203px">M</span>
<span class="dl" style="left:1222px">T</span>
<span class="dl" style="left:1241px">W</span>
<span class="dl" style="left:1260px">T</span>
<span class="dl" style="left:1279px">F</span>
<span class="dl" style="left:1298px">S</span>
<span class="dl" style="left:1317px">S</span>
<span class="dl" style="left:1336px">M</span>
<span class="dl" style="left:1355px">T</span>
<div style="left:957px;top:330px;width:60px;height:18px;overflow:hidden"><div class="sec" style="left:-957px;top:-330px"><span class="t" style="left:922.77px;top:333.6px;font-size:13px;color:#555;transform:scaleX(1.0197);">9/23/2018</span></div></div>
<span class="t" style="left:1055.77px;top:333.6px;font-size:13px;color:#555;transform:scaleX(1.0197);">9/30/2018</span>
<span class="t" style="left:1189.23px;top:333.6px;font-size:13px;color:#555;transform:scaleX(1.0243);">10/7/2018</span>
<span class="t" style="left:1321.98px;top:333.6px;font-size:13px;color:#555;transform:scaleX(1.0156);">10/14/2018</span>
<div style="left:951px;top:329px;width:6px;height:326px;background:linear-gradient(90deg,#a2a2a2 0,#a2a2a2 16%,#dedede 17%,#d6d6d6 50%,#c4c4c4 83%,#b0b0b0 84%,#b0b0b0 100%)"></div>
<div style="left:951px;top:597px;width:4px;height:44px;border:1px solid #a9d39b;background:#eee"></div>
<div style="left:953px;top:617px;width:3px;height:1px;background:#333"></div>
<div style="left:953px;top:620px;width:3px;height:1px;background:#333"></div>
<div style="left:953px;top:623px;width:3px;height:1px;background:#333"></div>
</div>
</div></body></html>
